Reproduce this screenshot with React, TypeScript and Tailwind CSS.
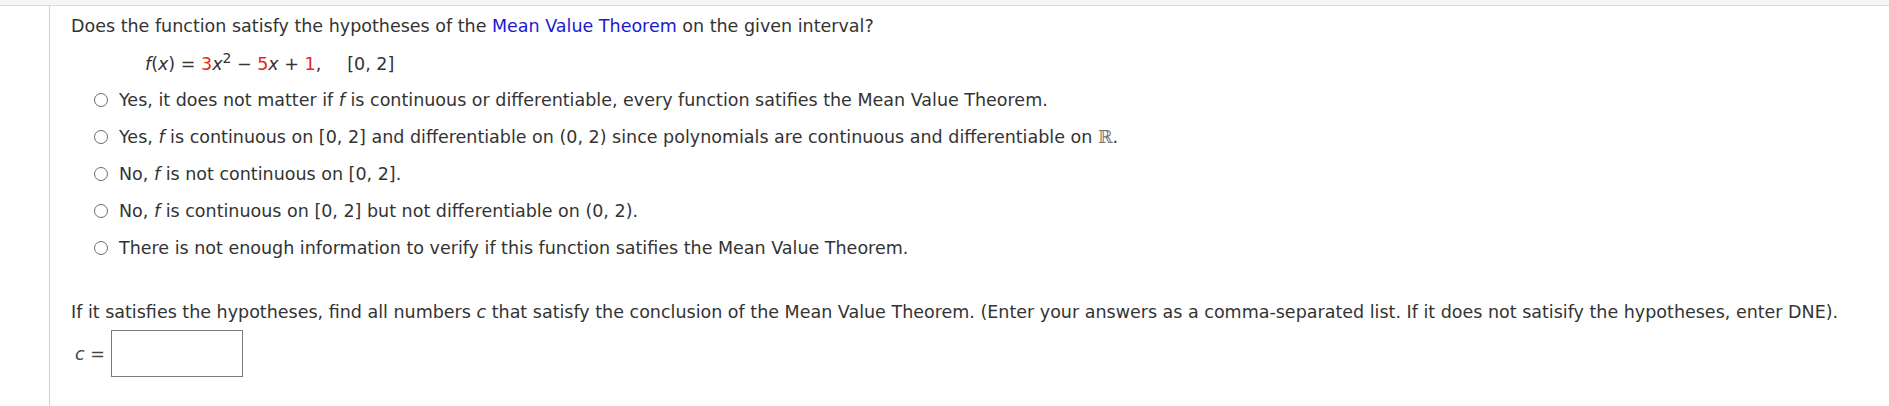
import React from "react";

const font = { fontFamily: '"DejaVu Sans", Verdana, sans-serif' };

function Radio() {
  return (
    <span className="inline-block w-[14px] h-[14px] rounded-full border border-[#6b6b6b] bg-white shrink-0" />
  );
}

function Option({ children }: { children: React.ReactNode }) {
  return (
    <div className="flex items-center h-[37px] pl-[23px]">
      <Radio />
      <span className="ml-[11px] whitespace-nowrap">{children}</span>
    </div>
  );
}

export default function App() {
  return (
    <div className="w-[1889px] h-[406px] bg-white text-[#333] text-[17.5px] leading-[24px]" style={font}>
      <div className="h-[6px] bg-[#f5f5f5] border-b border-[#dcdcdc]" />
      <div className="flex h-[400px]">
        <div className="w-[49px] shrink-0" />
        <div className="flex-1 border-l border-[#cfcfcf] pl-[21px]">
          <div className="mt-[8px] h-[24px] whitespace-nowrap">
            Does the function satisfy the hypotheses of the{" "}
            <span className="text-[#1a1ad0]">Mean Value Theorem</span> on the given interval?
          </div>
          <div className="mt-[14px] h-[24px] pl-[74px] whitespace-nowrap">
            <i>f</i>(<i>x</i>) = <span className="text-[#e8261c]">3</span>
            <i>x</i>
            <sup className="text-[14px] relative top-[-7px] align-baseline">2</sup> &minus;{" "}
            <span className="text-[#e8261c]">5</span>
            <i>x</i> + <span className="text-[#e8261c]">1</span>,
            <span className="inline-block w-[26px]" />[0, 2]
          </div>
          <div className="mt-[5px]">
            <Option>
              Yes, it does not matter if <i>f</i> is continuous or differentiable, every function satifies the Mean Value Theorem.
            </Option>
            <Option>
              Yes, <i>f</i> is continuous on [0, 2] and differentiable on (0, 2) since polynomials are continuous and differentiable on{" "}
              <span className="text-[#777]" style={{ fontFamily: '"DejaVu Serif", serif' }}>ℝ</span>.
            </Option>
            <Option>
              No, <i>f</i> is not continuous on [0, 2].
            </Option>
            <Option>
              No, <i>f</i> is continuous on [0, 2] but not differentiable on (0, 2).
            </Option>
            <Option>
              There is not enough information to verify if this function satifies the Mean Value Theorem.
            </Option>
          </div>
          <div className="mt-[34px] h-[24px] whitespace-nowrap">
            If it satisfies the hypotheses, find all numbers <i>c</i> that satisfy the conclusion of the Mean Value Theorem. (Enter your answers as a comma-separated list. If it does not satisify the hypotheses, enter DNE).
          </div>
          <div className="mt-[6px] flex items-center">
            <span className="ml-[4px] w-[36px] whitespace-nowrap text-[#444]">
              <i>c</i> =
            </span>
            <div className="w-[132px] h-[47px] border border-[#7a7a7a] bg-white" />
          </div>
        </div>
      </div>
    </div>
  );
}
